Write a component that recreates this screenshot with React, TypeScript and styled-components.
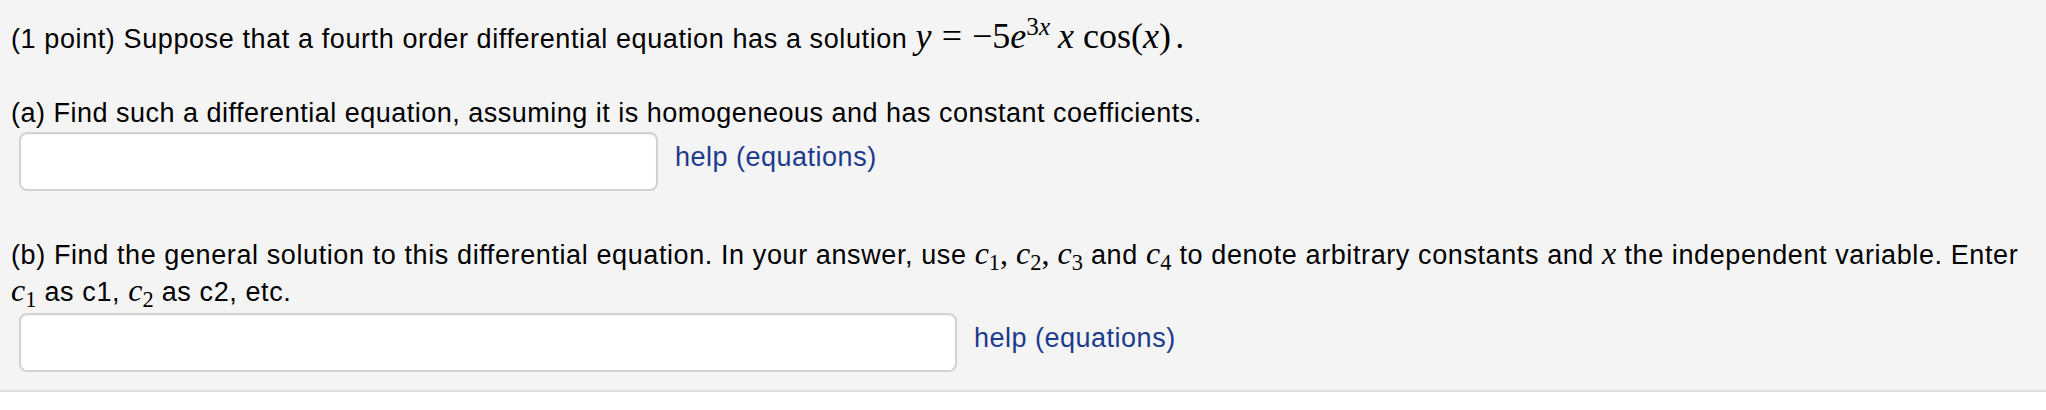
import React from "react";
import styled, { createGlobalStyle } from "styled-components";

const GlobalStyle = createGlobalStyle`
  html, body {
    margin: 0;
    padding: 0;
    background: #ffffff;
  }
  body {
    font-family: "Liberation Sans", Arial, Helvetica, sans-serif;
  }
`;

const Panel = styled.div`
  box-sizing: border-box;
  width: 100%;
  height: 392px;
  background: #f4f4f4;
  border-bottom: 2px solid #dddddd;
  padding: 18px 0 0 11px;
  display: flex;
  flex-direction: column;
  color: #000;
  font-family: "Liberation Sans", Arial, Helvetica, sans-serif;
  font-size: 27px;
  letter-spacing: 0.5px;
  line-height: 37px;
`;

const Line = styled.div<{ $mt?: number; $ls?: number }>`
  height: 37px;
  white-space: nowrap;
  margin-top: ${(p) => p.$mt ?? 0}px;
  letter-spacing: ${(p) => p.$ls ?? 0.5}px;
`;

const Math = styled.span<{ $size?: number }>`
  font-family: "Liberation Serif", "Times New Roman", serif;
  font-size: ${(p) => p.$size ?? 32}px;
  letter-spacing: 0;
`;

const V = styled.i`
  font-style: italic;
`;

const Sup = styled.sup`
  font-size: 0.7em;
  vertical-align: 0;
  position: relative;
  top: -0.5em;
  line-height: 0;
`;

const Sub = styled.sub`
  font-size: 0.7em;
  vertical-align: 0;
  position: relative;
  top: 0.25em;
  line-height: 0;
`;

const Rel = styled.span`
  margin: 0 0.28em;
`;

const Gap = styled.span<{ $w: number }>`
  display: inline-block;
  width: ${(p) => p.$w}em;
`;

const AnswerRow = styled.div<{ $mt: number }>`
  display: flex;
  align-items: flex-start;
  margin-top: ${(p) => p.$mt}px;
  padding-left: 8px;
`;

const AnswerInput = styled.input<{ $w: number }>`
  box-sizing: border-box;
  width: ${(p) => p.$w}px;
  height: 59px;
  background: #ffffff;
  border: 2px solid #d2d2d2;
  border-radius: 8px;
  box-shadow: inset 0 1px 2px rgba(0, 0, 0, 0.06);
  outline: none;
  margin: 0;
  padding: 0 10px;
  font-size: 26px;
`;

const HelpLink = styled.a`
  margin-left: 17px;
  margin-top: 7px;
  color: #1c3a8e;
  text-decoration: none;
  font-size: 27px;
  line-height: 37px;
  cursor: pointer;
`;

const C = ({ n }: { n: number }) => (
  <Math>
    <V>c</V>
    <Sub>{n}</Sub>
  </Math>
);

export default function App() {
  return (
    <>
      <GlobalStyle />
      <Panel>
        <Line $ls={0.6}>
          (1 point) Suppose that a fourth order differential equation has a solution{" "}
          <Math $size={36}>
            <V>y</V>
            <Rel>=</Rel>−5<V>e</V>
            <Sup>
              3<V>x</V>
            </Sup>
            <Gap $w={0.22} />
            <V>x</V>
            <Gap $w={0.25} />
            cos(<V>x</V>)<Gap $w={0.12} />.
          </Math>
        </Line>
        <Line $mt={40}>
          (a) Find such a differential equation, assuming it is homogeneous and has constant coefficients.
        </Line>
        <AnswerRow $mt={0}>
          <AnswerInput $w={639} type="text" aria-label="answer a" />
          <HelpLink>help (equations)</HelpLink>
        </AnswerRow>
        <Line $mt={44} $ls={0.6}>
          (b) Find the general solution to this differential equation. In your answer, use{" "}
          <C n={1} />
          <Math>, </Math>
          <C n={2} />
          <Math>, </Math>
          <C n={3} /> and <C n={4} /> to denote arbitrary constants and{" "}
          <Math>
            <V>x</V>
          </Math>{" "}
          the independent variable. Enter
        </Line>
        <Line $ls={0.6}>
          <C n={1} /> as c1, <C n={2} /> as c2, etc.
        </Line>
        <AnswerRow $mt={4}>
          <AnswerInput $w={938} type="text" aria-label="answer b" />
          <HelpLink>help (equations)</HelpLink>
        </AnswerRow>
      </Panel>
    </>
  );
}
